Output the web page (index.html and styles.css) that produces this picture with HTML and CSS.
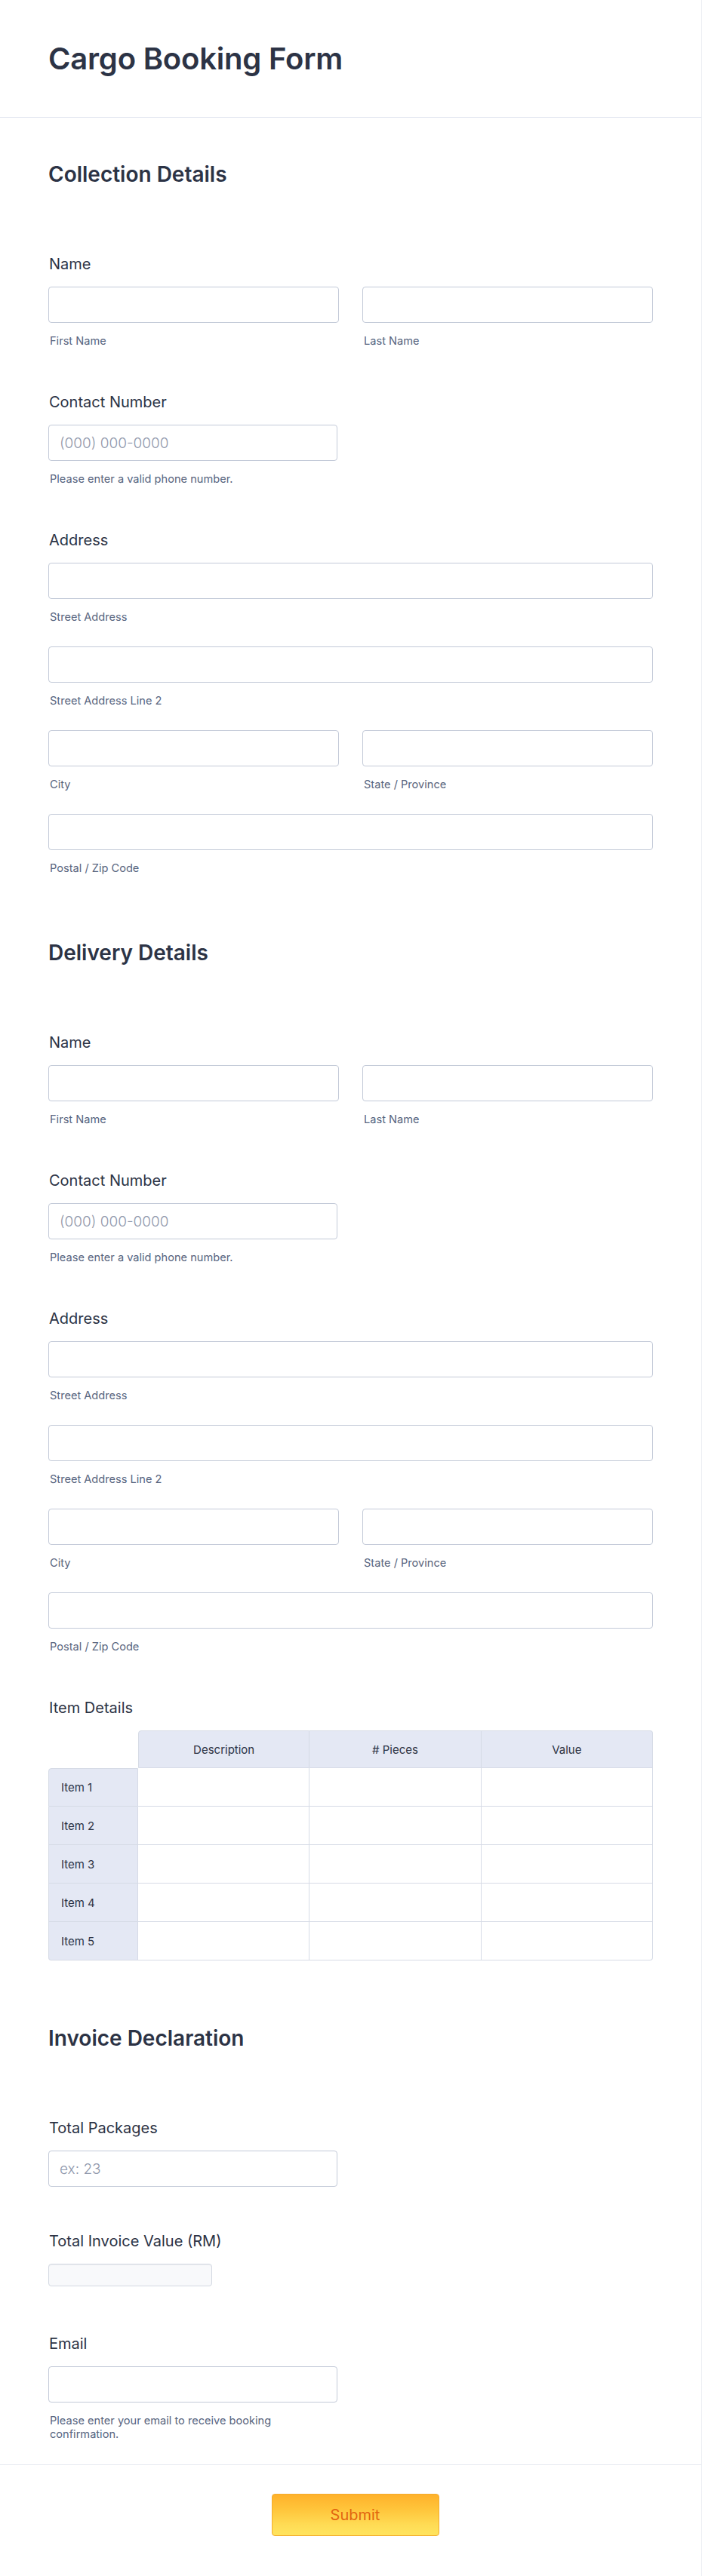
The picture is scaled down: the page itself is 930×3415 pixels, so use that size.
FILE: index.html
```html
<!DOCTYPE html>
<html lang="en">
<head>
<meta charset="utf-8">
<title>Cargo Booking Form</title>
<link rel="stylesheet" href="styles.css">
</head>
<body>
<div class="form">
  <header class="form-header">
    <h1 class="form-title">Cargo Booking Form</h1>
  </header>

  <main class="form-body">
    <section class="section">
      <h2 class="section-title">Collection Details</h2>
      <div class="fields">
        <div class="field">
          <label class="label">Name</label>
          <div class="row2">
            <div><input class="input" type="text"><span class="sublabel">First Name</span></div>
            <div><input class="input" type="text"><span class="sublabel">Last Name</span></div>
          </div>
        </div>
        <div class="field">
          <label class="label">Contact Number</label>
          <input class="input half" type="text" placeholder="(000) 000-0000">
          <span class="sublabel">Please enter a valid phone number.</span>
        </div>
        <div class="field">
          <label class="label">Address</label>
          <div class="stack">
            <div><input class="input" type="text"><span class="sublabel">Street Address</span></div>
            <div><input class="input" type="text"><span class="sublabel">Street Address Line 2</span></div>
            <div class="row2">
              <div><input class="input" type="text"><span class="sublabel">City</span></div>
              <div><input class="input" type="text"><span class="sublabel">State / Province</span></div>
            </div>
            <div><input class="input" type="text"><span class="sublabel">Postal / Zip Code</span></div>
          </div>
        </div>
      </div>
    </section>

    <section class="section">
      <h2 class="section-title">Delivery Details</h2>
      <div class="fields">
        <div class="field">
          <label class="label">Name</label>
          <div class="row2">
            <div><input class="input" type="text"><span class="sublabel">First Name</span></div>
            <div><input class="input" type="text"><span class="sublabel">Last Name</span></div>
          </div>
        </div>
        <div class="field">
          <label class="label">Contact Number</label>
          <input class="input half" type="text" placeholder="(000) 000-0000">
          <span class="sublabel">Please enter a valid phone number.</span>
        </div>
        <div class="field">
          <label class="label">Address</label>
          <div class="stack">
            <div><input class="input" type="text"><span class="sublabel">Street Address</span></div>
            <div><input class="input" type="text"><span class="sublabel">Street Address Line 2</span></div>
            <div class="row2">
              <div><input class="input" type="text"><span class="sublabel">City</span></div>
              <div><input class="input" type="text"><span class="sublabel">State / Province</span></div>
            </div>
            <div><input class="input" type="text"><span class="sublabel">Postal / Zip Code</span></div>
          </div>
        </div>
        <div class="field">
          <label class="label">Item Details</label>
          <div class="matrix">
            <div class="corner"></div>
            <div class="colhead first">Description</div>
            <div class="colhead"># Pieces</div>
            <div class="colhead last">Value</div>

            <div class="rowhead first">Item 1</div>
            <div class="cell"></div><div class="cell"></div><div class="cell"></div>
            <div class="rowhead">Item 2</div>
            <div class="cell"></div><div class="cell"></div><div class="cell"></div>
            <div class="rowhead">Item 3</div>
            <div class="cell"></div><div class="cell"></div><div class="cell"></div>
            <div class="rowhead">Item 4</div>
            <div class="cell"></div><div class="cell"></div><div class="cell"></div>
            <div class="rowhead last">Item 5</div>
            <div class="cell"></div><div class="cell"></div><div class="cell corner-br"></div>
          </div>
        </div>
      </div>
    </section>

    <section class="section">
      <h2 class="section-title">Invoice Declaration</h2>
      <div class="fields">
        <div class="field">
          <label class="label">Total Packages</label>
          <input class="input half" type="text" placeholder="ex: 23">
        </div>
        <div class="field field-calc">
          <label class="label">Total Invoice Value (RM)</label>
          <div class="calc-box"></div>
        </div>
        <div class="field">
          <label class="label">Email</label>
          <input class="input half" type="text">
          <span class="sublabel narrow">Please enter your email to receive booking confirmation.</span>
        </div>
      </div>
    </section>
  </main>

  <footer class="form-footer">
    <button class="submit" type="button">Submit</button>
  </footer>
</div>
</body>
</html>
```

FILE: styles.css
```css
* {
  box-sizing: border-box;
}

html, body {
  margin: 0;
  padding: 0;
  background: #ffffff;
}

body {
  font-family: "Inter", "Noto Sans", "Liberation Sans", sans-serif;
  color: #2c3345;
}

.form {
  width: 930px;
  border-right: 1px solid #eceef3;
  background: #ffffff;
}

/* Header */
.form-header {
  padding: 54px 64px 53px;
  border-bottom: 1px solid #dfe3ee;
}

.form-title {
  margin: 0;
  font-size: 40px;
  line-height: 48px;
  font-weight: 600;
  letter-spacing: -0.2px;
  color: #2c3345;
}

/* Body */
.form-body {
  padding: 59px 64px 31px;
  display: flex;
  flex-direction: column;
  gap: 87px;
}

.section-title {
  margin: 0 0 91px;
  font-size: 28px;
  line-height: 32px;
  font-weight: 600;
  color: #2c3345;
}

.fields {
  display: flex;
  flex-direction: column;
  gap: 60px;
}

.field-calc {
  margin-bottom: 4px;
}

.label {
  display: block;
  margin: 0 0 18px;
  padding-left: 1px;
  font-size: 20px;
  line-height: 24px;
  font-weight: 400;
  color: #2c3345;
}

.input {
  display: block;
  width: 100%;
  height: 48px;
  margin: 0;
  padding: 0 14px;
  border: 1px solid #c3cad8;
  border-radius: 4px;
  background: #ffffff;
  font-family: "Inter", "Noto Sans", sans-serif;
  font-size: 19px;
  font-weight: 300;
  color: #2c3345;
  outline: none;
}

.input::placeholder {
  color: #8f97ab;
  font-weight: 300;
}

.half {
  width: 383px;
}

.sublabel {
  display: block;
  margin-top: 15px;
  padding-left: 2px;
  font-size: 14.6px;
  line-height: 18px;
  color: #57647e;
}

.narrow {
  max-width: 383px;
}

.row2 {
  display: grid;
  grid-template-columns: 1fr 1fr;
  column-gap: 31px;
}

.stack {
  display: flex;
  flex-direction: column;
  gap: 30px;
}

.calc-box {
  width: 217px;
  height: 30px;
  border: 1px solid #d3d8e2;
  border-radius: 4px;
  background: #f8f9fb;
  box-shadow: inset 0 1px 1px rgba(44, 51, 69, 0.06);
}

/* Matrix */
.matrix {
  display: grid;
  grid-template-columns: 119px repeat(3, 1fr);
  grid-template-rows: 50px repeat(5, 51px);
  font-size: 15px;
  color: #2c3345;
}

.colhead {
  display: flex;
  align-items: center;
  justify-content: center;
  background: #e4e8f4;
  border-top: 1px solid #d6dbe6;
  border-right: 1px solid #d6dbe6;
  border-bottom: 1px solid #d6dbe6;
}

.colhead.first {
  border-left: 1px solid #d6dbe6;
  border-top-left-radius: 4px;
}

.colhead.last {
  border-top-right-radius: 4px;
}

.rowhead {
  display: flex;
  align-items: center;
  padding-left: 16px;
  background: #e4e8f4;
  border-left: 1px solid #d6dbe6;
  border-right: 1px solid #d6dbe6;
  border-bottom: 1px solid #d6dbe6;
}

.rowhead.first {
  border-top: 1px solid #d6dbe6;
  border-top-left-radius: 4px;
}

.rowhead.last {
  border-bottom-left-radius: 4px;
}

.cell {
  background: #ffffff;
  border-right: 1px solid #d6dbe6;
  border-bottom: 1px solid #d6dbe6;
}

.corner-br {
  border-bottom-right-radius: 4px;
}

/* Footer */
.form-footer {
  border-top: 1px solid #e6e9f0;
  padding: 38px 0 53px 12px;
  display: flex;
  justify-content: center;
}

.submit {
  width: 222px;
  height: 56px;
  border: 1px solid #f4ac2c;
  border-radius: 4px;
  background: linear-gradient(to bottom, #ffb12a 0%, #ffc43a 35%, #ffdc55 75%, #ffe45e 100%);
  font-family: "Inter", "Noto Sans", sans-serif;
  font-size: 20px;
  font-weight: 400;
  color: #e2650f;
  cursor: pointer;
}
```
